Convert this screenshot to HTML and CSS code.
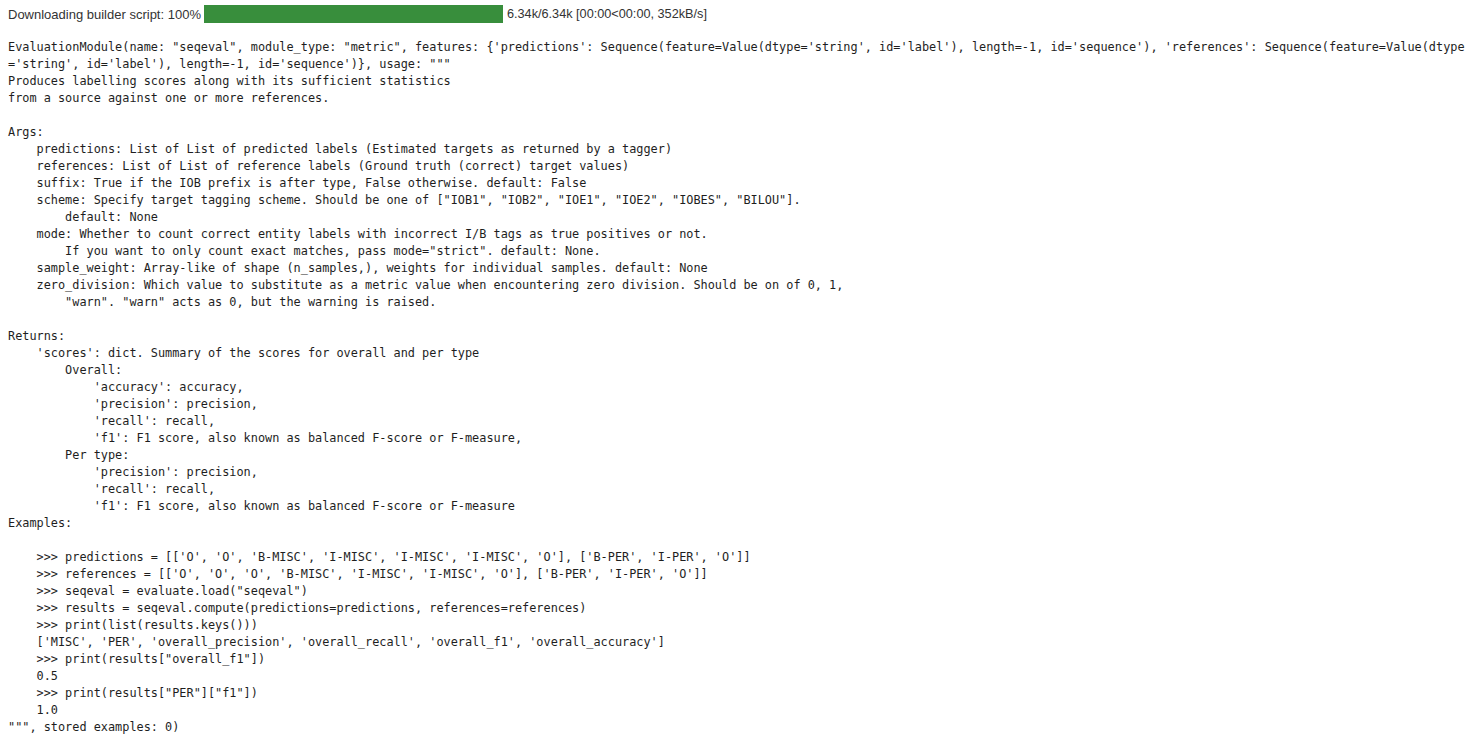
FILE: index.html
```html
<!DOCTYPE html>
<html>
<head>
<meta charset="utf-8">
<link rel="stylesheet" href="styles.css">
</head>
<body>
<div class="cell-output">
  <div class="progress-row">
    <span class="progress-label">Downloading builder script: 100%</span>
    <div class="progress-track"><div class="progress-fill"></div></div>
    <span class="progress-stats">6.34k/6.34k [00:00&lt;00:00, 352kB/s]</span>
  </div>
<pre class="stream">EvaluationModule(name: "seqeval", module_type: "metric", features: {'predictions': Sequence(feature=Value(dtype='string', id='label'), length=-1, id='sequence'), 'references': Sequence(feature=Value(dtype
='string', id='label'), length=-1, id='sequence')}, usage: """
Produces labelling scores along with its sufficient statistics
from a source against one or more references.

Args:
    predictions: List of List of predicted labels (Estimated targets as returned by a tagger)
    references: List of List of reference labels (Ground truth (correct) target values)
    suffix: True if the IOB prefix is after type, False otherwise. default: False
    scheme: Specify target tagging scheme. Should be one of ["IOB1", "IOB2", "IOE1", "IOE2", "IOBES", "BILOU"].
        default: None
    mode: Whether to count correct entity labels with incorrect I/B tags as true positives or not.
        If you want to only count exact matches, pass mode="strict". default: None.
    sample_weight: Array-like of shape (n_samples,), weights for individual samples. default: None
    zero_division: Which value to substitute as a metric value when encountering zero division. Should be on of 0, 1,
        "warn". "warn" acts as 0, but the warning is raised.

Returns:
    'scores': dict. Summary of the scores for overall and per type
        Overall:
            'accuracy': accuracy,
            'precision': precision,
            'recall': recall,
            'f1': F1 score, also known as balanced F-score or F-measure,
        Per type:
            'precision': precision,
            'recall': recall,
            'f1': F1 score, also known as balanced F-score or F-measure
Examples:

    &gt;&gt;&gt; predictions = [['O', 'O', 'B-MISC', 'I-MISC', 'I-MISC', 'I-MISC', 'O'], ['B-PER', 'I-PER', 'O']]
    &gt;&gt;&gt; references = [['O', 'O', 'O', 'B-MISC', 'I-MISC', 'I-MISC', 'O'], ['B-PER', 'I-PER', 'O']]
    &gt;&gt;&gt; seqeval = evaluate.load("seqeval")
    &gt;&gt;&gt; results = seqeval.compute(predictions=predictions, references=references)
    &gt;&gt;&gt; print(list(results.keys()))
    ['MISC', 'PER', 'overall_precision', 'overall_recall', 'overall_f1', 'overall_accuracy']
    &gt;&gt;&gt; print(results["overall_f1"])
    0.5
    &gt;&gt;&gt; print(results["PER"]["f1"])
    1.0
""", stored examples: 0)</pre>
</div>
</body>
</html>
```

FILE: styles.css
```css
html, body {
  margin: 0;
  padding: 0;
  background: #ffffff;
}

.cell-output {
  padding: 0 0 0 8px;
  color: #1e1e1e;
}

.progress-row {
  display: flex;
  align-items: center;
  height: 28px;
  font-family: "Liberation Sans", Arial, sans-serif;
  font-size: 13px;
  color: #333333;
}

.progress-label {
  white-space: nowrap;
}

.progress-track {
  width: 299px;
  height: 18px;
  margin: 0 4px 0 3px;
  background: #e6e6e6;
}

.progress-fill {
  width: 100%;
  height: 100%;
  background: #388e3c;
}

.progress-stats {
  white-space: nowrap;
  font-size: 12.7px;
}

.stream {
  margin: 11px 0 0 0;
  font-family: "DejaVu Sans Mono", monospace;
  font-size: 11.87px;
  line-height: 17px;
  white-space: pre;
  color: #1e1e1e;
}
```
